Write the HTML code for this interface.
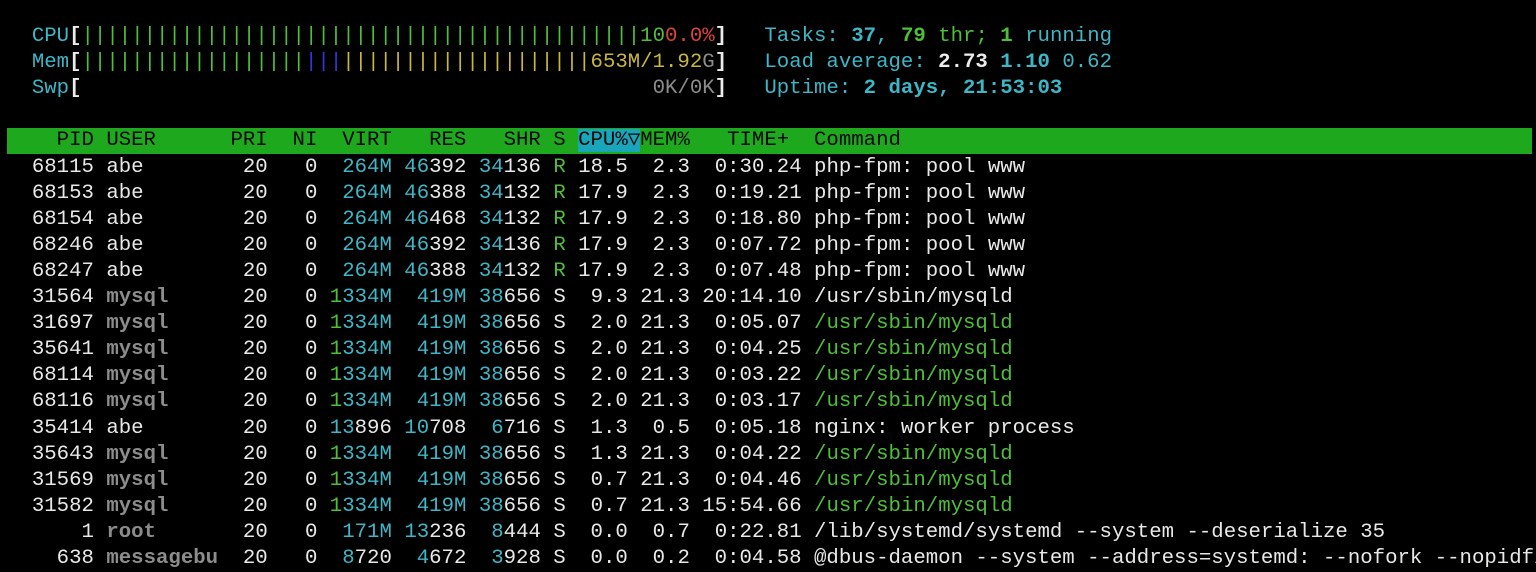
<!DOCTYPE html>
<html><head><meta charset="utf-8"><style>
html,body{margin:0;padding:0;background:#000;width:1536px;height:565px;overflow:hidden}
.l{position:absolute;left:7px;height:26.1px;line-height:26.1px;white-space:pre;font-family:"Liberation Mono","DejaVu Sans Mono",monospace;font-size:20.7px;color:#e8e8e8}
.c{color:#3fb6c6}.g{color:#4fbf3a}.w{color:#ececec}.gr{color:#8c8c8c}.r{color:#d8443a}.y{color:#c9b640}.bl{color:#3535e0}.b{font-weight:bold}
.hdr{background:#1ea81e;color:#080808;width:1525px}
.sel{background:#1aa6ba}
</style></head><body>
<div class="l" style="top:24px">  <span class="c">CPU</span><span class="w b">[</span><span class="g">|||||||||||||||||||||||||||||||||||||||||||||10</span><span class="r">0.0%</span><span class="w b">]</span>   <span class="c">Tasks: </span><span class="c b">37</span><span class="c">, </span><span class="g b">79</span><span class="g"> thr; </span><span class="g b">1</span><span class="c"> running</span></div>
<div class="l" style="top:50.1px">  <span class="c">Mem</span><span class="w b">[</span><span class="g">||||||||||||||||||</span><span class="bl">|||</span><span class="y">||||||||||||||||||||653M/1.92</span><span class="gr">G</span><span class="w b">]</span>   <span class="c">Load average: </span><span class="w b">2.73 </span><span class="c b">1.10 </span><span class="c">0.62</span></div>
<div class="l" style="top:76.2px">  <span class="c">Swp</span><span class="w b">[</span>                                              <span class="gr">0K/0K</span><span class="w b">]</span>   <span class="c">Uptime: </span><span class="c b">2 days, 21:53:03</span></div>
<div class="l hdr" style="top:128.4px">    PID USER      PRI  NI  VIRT   RES   SHR S <span class="sel">CPU%▽</span>MEM%   TIME+  Command</div>
<div class="l" style="top:154.5px">  68115 abe        20   0  <span class="c">264M</span> <span class="c">46</span>392 <span class="c">34</span>136 <span class="g">R</span> 18.5  2.3  0:30.24 php-fpm: pool www</div>
<div class="l" style="top:180.6px">  68153 abe        20   0  <span class="c">264M</span> <span class="c">46</span>388 <span class="c">34</span>132 <span class="g">R</span> 17.9  2.3  0:19.21 php-fpm: pool www</div>
<div class="l" style="top:206.7px">  68154 abe        20   0  <span class="c">264M</span> <span class="c">46</span>468 <span class="c">34</span>132 <span class="g">R</span> 17.9  2.3  0:18.80 php-fpm: pool www</div>
<div class="l" style="top:232.8px">  68246 abe        20   0  <span class="c">264M</span> <span class="c">46</span>392 <span class="c">34</span>136 <span class="g">R</span> 17.9  2.3  0:07.72 php-fpm: pool www</div>
<div class="l" style="top:258.9px">  68247 abe        20   0  <span class="c">264M</span> <span class="c">46</span>388 <span class="c">34</span>132 <span class="g">R</span> 17.9  2.3  0:07.48 php-fpm: pool www</div>
<div class="l" style="top:285px">  31564 <span class="gr b">mysql</span>      20   0 <span class="g">1</span><span class="c">334M</span>  <span class="c">419M</span> <span class="c">38</span>656 S  9.3 21.3 20:14.10 /usr/sbin/mysqld</div>
<div class="l" style="top:311.1px">  31697 <span class="gr b">mysql</span>      20   0 <span class="g">1</span><span class="c">334M</span>  <span class="c">419M</span> <span class="c">38</span>656 S  2.0 21.3  0:05.07 <span class="g">/usr/sbin/mysqld</span></div>
<div class="l" style="top:337.2px">  35641 <span class="gr b">mysql</span>      20   0 <span class="g">1</span><span class="c">334M</span>  <span class="c">419M</span> <span class="c">38</span>656 S  2.0 21.3  0:04.25 <span class="g">/usr/sbin/mysqld</span></div>
<div class="l" style="top:363.3px">  68114 <span class="gr b">mysql</span>      20   0 <span class="g">1</span><span class="c">334M</span>  <span class="c">419M</span> <span class="c">38</span>656 S  2.0 21.3  0:03.22 <span class="g">/usr/sbin/mysqld</span></div>
<div class="l" style="top:389.4px">  68116 <span class="gr b">mysql</span>      20   0 <span class="g">1</span><span class="c">334M</span>  <span class="c">419M</span> <span class="c">38</span>656 S  2.0 21.3  0:03.17 <span class="g">/usr/sbin/mysqld</span></div>
<div class="l" style="top:415.5px">  35414 abe        20   0 <span class="c">13</span>896 <span class="c">10</span>708  <span class="c">6</span>716 S  1.3  0.5  0:05.18 nginx: worker process</div>
<div class="l" style="top:441.6px">  35643 <span class="gr b">mysql</span>      20   0 <span class="g">1</span><span class="c">334M</span>  <span class="c">419M</span> <span class="c">38</span>656 S  1.3 21.3  0:04.22 <span class="g">/usr/sbin/mysqld</span></div>
<div class="l" style="top:467.7px">  31569 <span class="gr b">mysql</span>      20   0 <span class="g">1</span><span class="c">334M</span>  <span class="c">419M</span> <span class="c">38</span>656 S  0.7 21.3  0:04.46 <span class="g">/usr/sbin/mysqld</span></div>
<div class="l" style="top:493.8px">  31582 <span class="gr b">mysql</span>      20   0 <span class="g">1</span><span class="c">334M</span>  <span class="c">419M</span> <span class="c">38</span>656 S  0.7 21.3 15:54.66 <span class="g">/usr/sbin/mysqld</span></div>
<div class="l" style="top:519.9px">      1 <span class="gr b">root</span>       20   0  <span class="c">171M</span> <span class="c">13</span>236  <span class="c">8</span>444 S  0.0  0.7  0:22.81 /lib/systemd/systemd --system --deserialize 35</div>
<div class="l" style="top:546px">    638 <span class="gr b">messagebu</span>  20   0  <span class="c">8</span>720  <span class="c">4</span>672  <span class="c">3</span>928 S  0.0  0.2  0:04.58 @dbus-daemon --system --address=systemd: --nofork --nopidfile</div>
</body></html>
